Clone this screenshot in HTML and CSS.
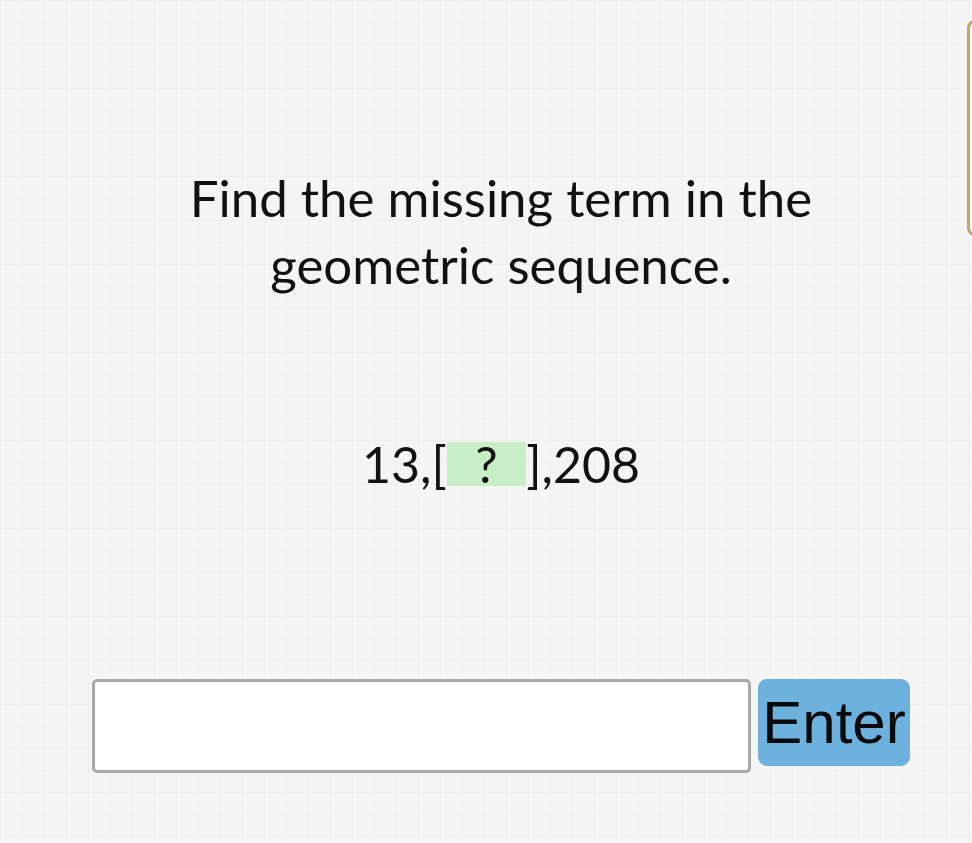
FILE: index.html
```html
<!DOCTYPE html>
<html>
<head>
<meta charset="utf-8">
<link rel="stylesheet" href="styles.css">
</head>
<body>
<div class="page">
  <main class="main">
    <h1 class="question">Find the missing term in the<br>geometric sequence.</h1>
    <p class="sequence">13,[<span class="blank">&nbsp;&nbsp;?&nbsp;&nbsp;</span>],208</p>
    <form class="answer" onsubmit="return false">
      <input class="field" type="text" aria-label="Answer">
      <button class="enter" type="submit">Enter</button>
    </form>
  </main>
  <div class="side-tab"></div>
</div>
</body>
</html>
```

FILE: styles.css
```css
html, body {
  margin: 0;
  padding: 0;
}

body {
  width: 972px;
  height: 843px;
  overflow: hidden;
  background-color: #f5f5f5;
  background-image:
    linear-gradient(to right, rgba(0,0,0,0.025) 1px, transparent 1px),
    linear-gradient(to bottom, rgba(0,0,0,0.025) 1px, transparent 1px);
  background-size: 22px 22px;
  font-family: "Lato", "Open Sans", sans-serif;
  color: #111;
}

.page {
  position: relative;
  width: 972px;
  height: 843px;
}

.main {
  display: flex;
  flex-direction: column;
  align-items: center;
  padding-left: 30px;
  padding-top: 164px;
}

.question {
  margin: 0;
  font-weight: 400;
  font-size: 51px;
  line-height: 67px;
  text-align: center;
}

.sequence {
  margin: 138px 0 0 0;
  font-size: 50px;
  line-height: 56px;
  height: 56px;
}

.blank {
  display: inline-block;
  height: 44px;
  line-height: 44px;
  padding: 0 3px;
  background: #c8eec6;
}

.answer {
  display: flex;
  align-items: flex-start;
  gap: 7px;
  margin-top: 187px;
}

.field {
  box-sizing: border-box;
  width: 659px;
  height: 94px;
  border: 3px solid #a9a9a9;
  border-radius: 5px;
  background: #fff;
  margin: 0;
}

.enter {
  box-sizing: border-box;
  width: 152px;
  height: 87px;
  border: none;
  border-radius: 9px;
  background: #6db2df;
  color: #0a0a0a;
  font-family: "Liberation Sans", Arial, sans-serif;
  font-size: 60px;
  padding: 0;
  margin: 0;
}

.side-tab {
  position: absolute;
  left: 967px;
  top: 20px;
  width: 20px;
  height: 216px;
  box-sizing: border-box;
  border: 3px solid #c9a267;
  border-radius: 8px;
  background: #fff;
}
```
